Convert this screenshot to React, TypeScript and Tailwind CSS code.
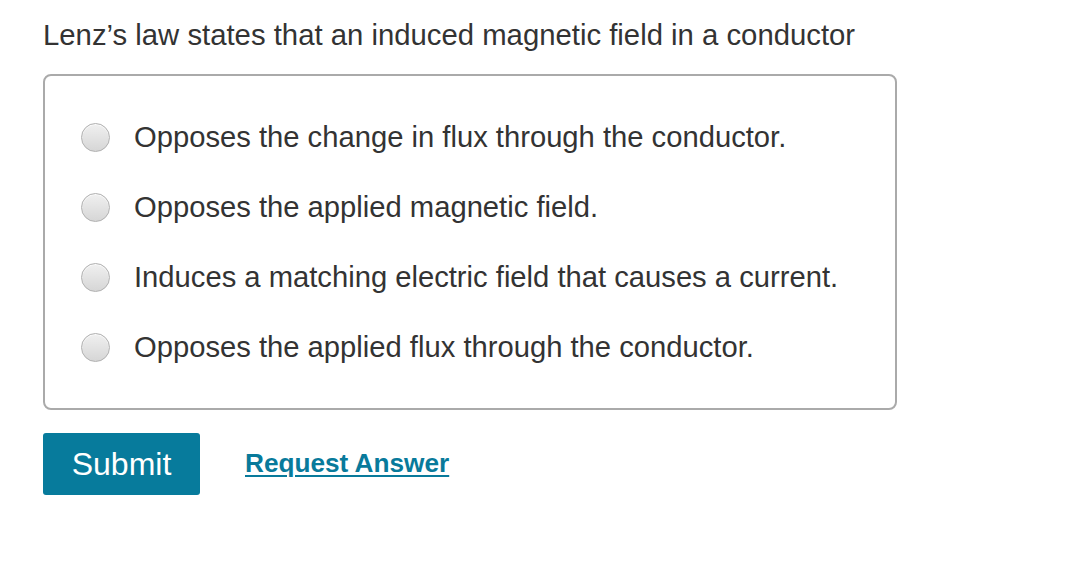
import React from 'react';

const options = [
  'Opposes the change in flux through the conductor.',
  'Opposes the applied magnetic field.',
  'Induces a matching electric field that causes a current.',
  'Opposes the applied flux through the conductor.',
];

const Radio: React.FC = () => (
  <span className="w-[29px] h-[29px] rounded-full border border-[#b0b0b0] bg-gradient-to-b from-[#f0f0f0] to-[#d6d6d6] shrink-0 shadow-[inset_0_1px_1px_rgba(255,255,255,0.8)]"></span>
);

export default function App() {
  return (
    <div className="min-h-screen bg-white font-['Liberation_Sans',Arial,sans-serif] text-[#333] pl-[43px] pt-[18px]">
      {/* Question */}
      <p className="text-[29.3px] leading-[34px]">Lenz’s law states that an induced magnetic field in a conductor</p>

      {/* Options */}
      <div className="mt-[22px] w-[854px] h-[336px] border-2 border-[#aaaaaa] rounded-[8px] pl-[36px] pt-[44px] flex flex-col gap-[36px]">
        {options.map((opt) => (
          <label key={opt} className="flex items-center gap-[24px] h-[34px] cursor-pointer">
            <Radio />
            <span className="text-[29.2px] leading-[34px]">{opt}</span>
          </label>
        ))}
      </div>

      {/* Actions */}
      <div className="mt-[23px] flex items-center gap-[45px]">
        <button className="w-[157px] h-[62px] rounded-[3px] bg-[#077b9c] text-white text-[32px]">Submit</button>
        <a href="#" className="text-[26.2px] font-bold text-[#087a9b] underline underline-offset-[3px] decoration-2">Request Answer</a>
      </div>
    </div>
  );
}
